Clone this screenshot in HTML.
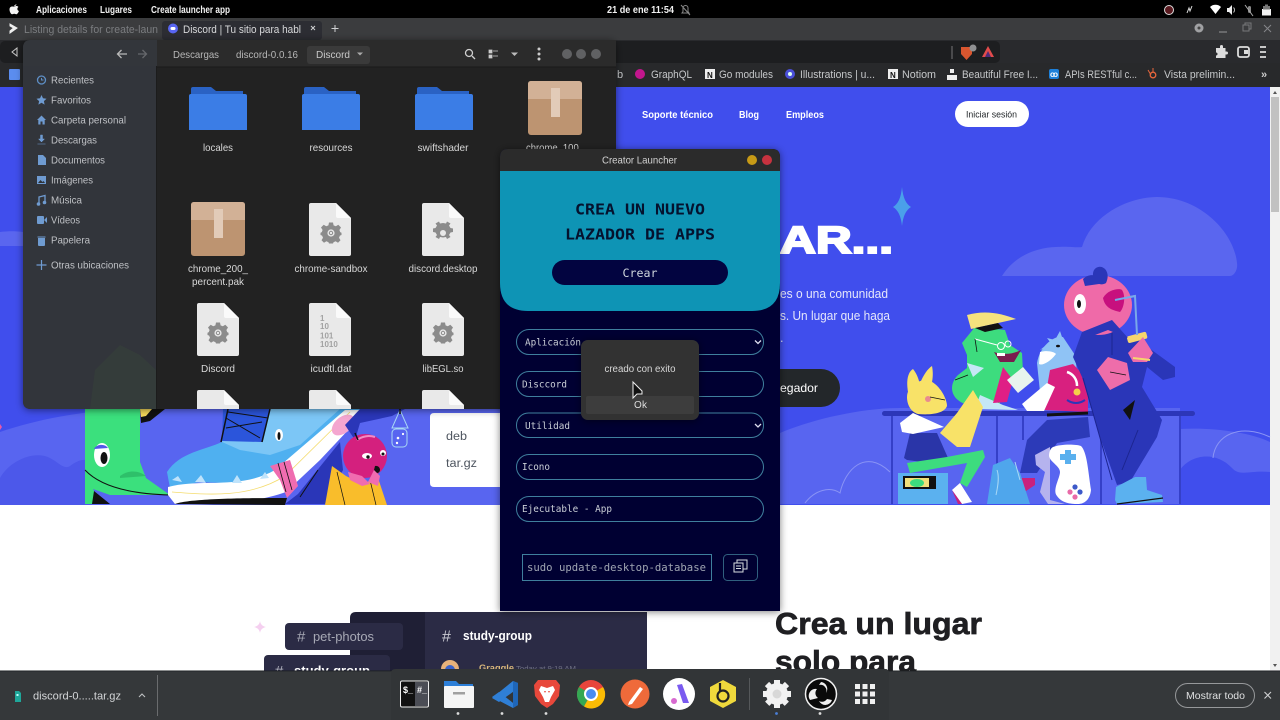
<!DOCTYPE html>
<html lang="es"><head><meta charset="utf-8"><title>Creator Launcher</title>
<style>
html,body{margin:0;padding:0;background:#000;width:1280px;height:720px;overflow:hidden}
svg{display:block}
text{font-family:"Liberation Sans",sans-serif;white-space:pre}
.m{font-family:"DejaVu Sans Mono","Liberation Mono",monospace}
.top{fill:#f2f2f2;font-size:10px;font-weight:bold}
.bm{fill:#c6c8ca;font-size:11px}
.side{fill:#bfc1c5;font-size:10.5px}
.file{fill:#d8d8d8;font-size:10.5px;text-anchor:middle}
.nav{fill:#fff;font-size:10.5px;font-weight:bold}
.para{fill:#e4e6fb;font-size:12.5px}
.fld{fill:#c9ced6;font-size:10px}
.ln{fill:none;stroke:#3f7f9d;stroke-width:1}
</style></head><body>
<svg xmlns="http://www.w3.org/2000/svg" width="1280" height="720" viewBox="0 0 1280 720">
<defs>
<filter id="sh" x="-10%" y="-10%" width="120%" height="120%"><feDropShadow dx="0" dy="1" stdDeviation="4" flood-color="#000" flood-opacity=".5"/></filter>
<clipPath id="fmclip"><rect x="157" y="67" width="459" height="342"/></clipPath>
<clipPath id="botclip"><rect x="0" y="505" width="1270" height="166"/></clipPath>
<symbol id="folder" viewBox="0 0 58 43"><path d="M2 2 Q2 0 4 0H22L27 4H54V10H2Z" fill="#2a62c4"/><path d="M0 9 Q0 7 2 7H56Q58 7 58 9V43H0Z" fill="#3b7de6"/></symbol>
<symbol id="box" viewBox="0 0 54 54"><rect width="54" height="54" rx="3" fill="#bd9471"/><path d="M0 3Q0 0 3 0H51Q54 0 54 3V18H0Z" fill="#d2b196"/><rect x="23" y="7" width="9" height="29" fill="#e2cbb8"/></symbol>
<symbol id="doc" viewBox="0 0 42 53"><path d="M2 0H27L42 15V51Q42 53 40 53H2Q0 53 0 51V2Q0 0 2 0Z" fill="#e9e9e9"/><path d="M27 0L42 15H29Q27 15 27 13Z" fill="#fafafa"/></symbol>
<symbol id="gear" viewBox="-11 -11 22 22"><path d="M-2-10.5H2L2.6-7.6 4.8-6.7 7.3-8.3 10-5.5 8.4-3 9.2-.9 10.5-.2V2L8.9 2.6 8 4.8 9.5 7.3 7 9.8 4.6 8.3 2.5 9.2 2 10.5H-2L-2.5 9.2-4.6 8.3-7 9.8-9.5 7.3-8 4.8-8.9 2.6-10.5 2V-.2L-9.2-.9-8.4-3-10-5.5-7.3-8.3-4.8-6.7-2.6-7.6Z" fill="#8b8b8b"/><circle r="3.6" fill="#e9e9e9"/><circle r="2.2" fill="#8b8b8b"/><circle r="1.2" fill="#e9e9e9"/></symbol>
</defs>

<!-- browser chrome -->
<rect width="1280" height="720" fill="#000"/>
<rect y="18" width="1280" height="22" fill="#3b3c3e"/>
<rect x="162" y="21" width="160" height="19" rx="3" fill="#2c2d33"/>
<rect y="40" width="1280" height="24" fill="#292a2d"/>
<rect x="0" y="41" width="1000" height="22" rx="5" fill="#1d1e20"/>
<rect y="63" width="1280" height="24" fill="#28292b"/>

<!-- hero -->
<rect y="87" width="1270" height="418" fill="#404eed"/>
<rect y="505" width="1270" height="166" fill="#fff"/>
<rect x="1270" y="87" width="10" height="584" fill="#f1f1f1"/>
<rect x="1271" y="97" width="8" height="115" fill="#c1c1c1"/>
<path d="M1275 91l-2 3h4zM1275 667l-2-3h4z" fill="#555"/>

<!-- left scene -->
<path d="M0 232C8 231 16 231 23 232V246H0Z" fill="#5a66ef"/>
<path d="M0 432C40 418 90 410 140 408H500V505H0Z" fill="#5865f0"/>
<path d="M0 478C10 460 35 450 50 458 58 462 64 470 70 466 78 460 85 458 92 462V505H0Z" fill="#4c58ea"/>
<path d="M0 424l2 3-2 3z" fill="#e85aa8"/>
<path d="M85 409H140V462L146 478 170 495H110L93 489 101 504H85Z" fill="#3be07d"/>
<path d="M120 476C128 470 138 470 146 476L120 478Z" fill="#2ec06a"/>
<path d="M85 470C100 486 130 494 170 495" fill="none" stroke="#111" stroke-width="1"/>
<path d="M92 504L94 491 110 504Z" fill="#111"/>
<ellipse cx="102" cy="455" rx="8" ry="12" fill="#fff"/><ellipse cx="104" cy="458" rx="3.5" ry="6" fill="#111"/><path d="M94 449a8 7 0 0 1 14-1z" fill="#5058e8"/>
<path d="M140 409H165L150 421 141 423Z" fill="#111"/><path d="M140 409H152L146 416 141 417Z" fill="#f9dc5c"/>
<!-- shoe -->
<path d="M167 472C180 452 205 450 222 442L228 409H365L330 442 292 470 270 485 200 482 170 488Z" fill="#4fb0f0"/>
<path d="M228 409H340L300 445 270 455 240 450 222 442Z" fill="#7cc6f6"/>
<path d="M223 409H270L262 442 222 441Z" fill="#2b55db"/>
<path d="M228 412L268 418M226 428L262 422M226 418L260 438" stroke="#111" stroke-width="1"/>
<path d="M228 409L221 442M270 409L262 442" stroke="#111" stroke-width="1.5"/>
<ellipse cx="279" cy="435" rx="4" ry="6" fill="#fff"/><ellipse cx="279" cy="436" rx="1.5" ry="4" fill="#111"/>
<path d="M168 487C200 478 240 490 275 470L345 410H367L320 460 286 492C250 505 200 505 175 504L168 495Z" fill="#fff"/>
<path d="M172 492C210 495 250 498 285 476L350 412" fill="none" stroke="#f4dc6e" stroke-width=".8"/>
<path d="M175 504C190 498 260 498 287 498L285 505Z" fill="#111"/>
<path d="M172 480l6-4 4 6ZM195 482l6-7 5 8ZM232 483l5-8 5 8ZM260 479l5-7 4 6Z" fill="#bfe3fb"/>
<ellipse cx="343" cy="425" rx="13" ry="8" transform="rotate(-40 343 425)" fill="#f4a6d0"/>
<path d="M270 466L290 460 298 486 287 498 280 480Z" fill="#ef6cb0"/>
<path d="M284 462L292 490M278 463L286 492" stroke="#111" stroke-width=".8"/>
<path d="M298 494L340 442 343 470 325 504H285Z" fill="#2a36b8"/>
<path d="M300 497L318 470" stroke="#111" stroke-width="1"/>
<path d="M360 409L405 409 392 416 360 423 355 440 345 425Z" fill="#2a36b8"/>
<!-- pink head & yellow body -->
<path d="M325 505L332 466 346 476 362 484 378 478 387 505Z" fill="#f9bd2b"/>
<path d="M337 472L345 505M370 480L376 505" stroke="#111" stroke-width=".7"/>
<circle cx="365" cy="456" r="22" fill="#d4207e"/>
<path d="M357 440a20 20 0 0 1 18-3" fill="none" stroke="#f28cc4" stroke-width="2"/>
<ellipse cx="367" cy="456" rx="5" ry="3" fill="#fff"/><ellipse cx="383" cy="453" rx="3" ry="3" fill="#fff"/><circle cx="368" cy="457" r="1.7" fill="#111"/><circle cx="383" cy="454" r="1.5" fill="#111"/>
<path d="M375 466a4 4 0 0 1 5 4 3 3 0 0 1-6 0z" fill="#111"/>
<path d="M348 472L362 476 370 484 362 486 350 480Z" fill="#f06cb0"/><path d="M368 482L374 470 380 476 378 486Z" fill="#f06cb0"/>
<path d="M358 440L355 433" stroke="#111" stroke-width="1.5"/>
<!-- jar -->
<g fill="none" stroke="#a8d8f5" stroke-width="1"><path d="M400 410L392 428H408Z"/><rect x="392" y="429" width="15" height="18" rx="4"/></g>
<path d="M400 409v5" stroke="#111" stroke-width="1.5"/>
<circle cx="398" cy="438" r="1.3" fill="#fff"/><circle cx="403" cy="434" r="1.1" fill="#fff"/><circle cx="397" cy="443" r="1.2" fill="#fff"/>
<!-- card -->
<path d="M434 413H500V487H434Q430 487 430 483V417Q430 413 434 413Z" fill="#fff"/>
<text x="446" y="440" font-size="11.5" fill="#4f5660" textLength="21" lengthAdjust="spacingAndGlyphs">deb</text>
<text x="446" y="467" font-size="11.5" fill="#4f5660" textLength="31" lengthAdjust="spacingAndGlyphs">tar.gz</text>

<!-- right scene -->
<path d="M1002 276C1012 260 1030 248 1056 247 1070 246 1076 248 1082 247 1092 214 1130 197 1157 197 1200 197 1234 232 1237 263 1238 270 1234 276 1230 276Z" fill="#5a66ef"/>
<path d="M902 187C903 198 906 204 911 207 906 210 903 216 902 226 901 216 898 210 893 207 898 204 901 198 902 187Z" fill="#4aa0ea"/>
<path d="M780 433C810 420 860 408 900 408H1180V429C1210 427 1250 432 1270 442V504H780Z" fill="#5865f0"/>
<path d="M1180 470C1190 455 1215 450 1232 468 1240 477 1250 470 1270 472V504H1180Z" fill="#404eed"/>
<path d="M1213 458C1215 435 1240 423 1270 437" fill="none" stroke="#8a94f5" stroke-width="1"/>
<path d="M805 503C815 490 830 486 840 493 845 470 865 448 890 472" fill="none" stroke="#8a94f5" stroke-width="1"/>
<path d="M892 416V504M997 416V504M1023 416V440M1101 416V504M1180 416V504" stroke="#3540c8" stroke-width="2"/>
<rect x="882" y="411" width="313" height="5" rx="2.5" fill="#2c36b8"/>
<!-- heading/para -->
<text x="780" y="253" font-size="38" font-weight="bold" fill="#fff" stroke="#fff" stroke-width="2" textLength="113" lengthAdjust="spacingAndGlyphs">AR...</text>
<text class="para" x="780" y="298" textLength="108" lengthAdjust="spacingAndGlyphs">es o una comunidad</text>
<text class="para" x="780" y="320" textLength="110" lengthAdjust="spacingAndGlyphs">s. Un lugar que haga</text>
<text class="para" x="780" y="342">.</text>
<path d="M780 369H821A19 19 0 0 1 821 407H780Z" fill="#23272a"/>
<text x="780" y="392" font-size="12" fill="#fff" textLength="38" lengthAdjust="spacingAndGlyphs">egador</text>
<!-- green guy -->
<path d="M962 343L975 327 1005 330 1010 345 1022 353 1023 372 1000 388 1000 408 968 405C950 400 948 385 958 375L967 368 967 355Z" fill="#3ddc7e"/>
<path d="M967 363L984 368 973 377Z" fill="#c5e7f5"/><path d="M975 409L980 395 1003 405 1018 410Z" fill="#c5e7f5"/>
<path d="M967 315C985 310 1000 313 1016 319L998 323 971 329Z" fill="#f5e27e"/><path d="M975 328L998 323 1003 328 985 332Z" fill="#111"/>
<path d="M993 403L1003 367 1013 380 1007 402Z" fill="#df1f85"/>
<path d="M1007 380L1023 367 1034 380 1018 393Z" fill="#e8f4ee"/>
<circle cx="1001" cy="346" r="3.5" fill="none" stroke="#fff" stroke-width="1"/><circle cx="1008" cy="344" r="3" fill="none" stroke="#fff" stroke-width="1"/><path d="M997 345L975 339" stroke="#fff" stroke-width="1"/>
<path d="M994 352C1005 356 1015 353 1021 350L1014 362H1000Z" fill="#7a1d4e"/><path d="M997 353h8v3h-8z" fill="#fff"/>
<path d="M955 380L968 375M975 339L977 352" stroke="#111" stroke-width=".8"/>
<!-- blue guy -->
<path d="M1037 363C1040 345 1055 335 1063 337L1075 355 1078 380 1040 392Z" fill="#8fc3f5"/>
<path d="M1040 350L1050 342 1047 338 1055 340 1060 331 1063 340Z" fill="#8fc3f5"/>
<path d="M1040 352C1048 350 1054 352 1056 354 1050 362 1042 366 1039 364Z" fill="#fff"/>
<ellipse cx="1058" cy="346" rx="2" ry="1.3" fill="#111"/>
<path d="M1043 410L1050 370 1073 364 1088 380 1088 412Z" fill="#d8207f"/>
<path d="M1067 372a14 14 0 0 1 10 14" fill="none" stroke="#fff" stroke-width="2.5"/>
<circle cx="1077" cy="392" r="3.5" fill="#f5d04a"/>
<path d="M1067 400c6 4 12 4 18 0" fill="none" stroke="#2c36b8" stroke-width="2"/>
<path d="M1022 404L1047 383 1055 387 1044 411 1027 411Z" fill="#fff"/>
<path d="M1020 473L1027 440 1047 420 1088 417 1090 437 1057 443 1037 473Z" fill="#2c3ab8"/>
<path d="M1047 415L1088 413" stroke="#111" stroke-width="3"/>
<path d="M1010 490L1020 478 1035 478 1035 485 1020 495Z" fill="#c9217d"/>
<!-- rock/controller -->
<path d="M987 504L993 465 1010 458 1020 473 1030 504Z" fill="#4fa6ec"/>
<path d="M997 470C1000 478 997 490 996 495M1015 462L1020 480" stroke="#a8d8f5" stroke-width="1" fill="none"/>
<path d="M1035 455L1050 447 1050 500 1065 504H1048L1040 492 1045 472 1036 465Z" fill="#b5b3ee"/>
<path d="M1053 447C1060 444 1076 444 1081 446 1087 452 1088 470 1091 490 1090 500 1084 504 1078 504 1070 504 1062 503 1057 496 1052 490 1060 478 1060 472 1060 466 1050 462 1049 456 1049 451 1051 448 1053 447Z" fill="#fff"/>
<path d="M1065 450h6v4h5v6h-5v4h-6v-4h-5v-6h5z" fill="#5ab0ee"/>
<circle cx="1075" cy="487" r="2.6" fill="#3d59c9"/><circle cx="1080" cy="492" r="2.6" fill="#3d59c9"/><circle cx="1070" cy="492" r="2.6" fill="#e86aa8"/><circle cx="1075" cy="497" r="2.6" fill="#e86aa8"/>
<!-- tall guy -->
<path d="M1082 332L1113 322 1127 337 1138 340 1175 367 1175 377 1163 380 1147 367 1142 387 1162 420 1157 437 1130 482 1117 485 1100 437 1082 377 1073 357Z" fill="#2a36b8"/>
<path d="M1083 378L1112 480M1138 430L1122 470M1112 322L1112 355" fill="none" stroke="#1c2590" stroke-width="1"/>
<path d="M1123 410L1135 400 1130 420Z" fill="#111"/>
<path d="M1097 370L1108 357 1127 363 1130 380 1110 390Z" fill="#ee6daa"/>
<path d="M1110 372L1126 375" stroke="#111" stroke-width=".8"/>
<rect x="1127" y="334" width="20" height="7" rx="2" transform="rotate(-15 1137 337)" fill="#f6d56e"/>
<path d="M1128 353L1143 337 1153 353 1147 362 1133 362Z" fill="#ee6daa"/>
<path d="M1133 358L1150 360" stroke="#f6d56e" stroke-width="2"/>
<path d="M1115 300L1135 296 1137 335" fill="none" stroke="#79a8ea" stroke-width="2"/>
<ellipse cx="1098" cy="305" rx="34" ry="30" fill="#ef6aa8"/>
<path d="M1082 332L1112 320 1128 338 1108 330 1082 340Z" fill="#2a36b8"/>
<path d="M1094 270C1100 262 1112 270 1106 283 1098 288 1090 278 1094 270Z" fill="#2a36b8"/>
<path d="M1083 279C1090 272 1100 276 1104 280L1106 283 1085 286Z" fill="#2a36b8"/>
<path d="M1103 298C1108 289 1120 288 1122 290 1126 296 1124 308 1120 312 1112 310 1105 308 1103 298Z" fill="#c7107e"/>
<path d="M1115 300L1135 296" stroke="#79a8ea" stroke-width="2"/>
<ellipse cx="1080" cy="304" rx="6" ry="10" fill="#fff"/><ellipse cx="1079" cy="304" rx="2" ry="4" fill="#111"/>
<path d="M1115 500L1116 487 1135 477 1146 477 1147 490 1162 495 1163 502 1117 504Z" fill="#5bb1ef"/>
<path d="M1117 504L1163 498" stroke="#111" stroke-width="1.3"/>
<!-- yellow rabbit -->
<path d="M908 392C906 380 908 372 913 369 918 375 921 385 920 392Z" fill="#f8e268"/>
<path d="M918 388C922 378 926 370 932 366 934 376 932 386 928 392Z" fill="#f8e268"/>
<path d="M907 397C907 387 917 380 927 380 938 382 947 398 947 406 944 414 930 415 918 414 911 412 907 405 907 397Z" fill="#f8e268"/>
<circle cx="928" cy="399" r="3" fill="#e88b90"/><path d="M930 397L945 400" stroke="#111" stroke-width=".8"/>
<path d="M904 458L910 433H937L948 458 930 463 907 460Z" fill="#2a35a8"/>
<path d="M957 413L973 390 983 407 970 447 957 447 940 433Z" fill="#f8e268"/>
<path d="M900 423L913 413 944 427 913 434 902 432Z" fill="#fff"/>
<path d="M907 463L947 457 983 450 985 457 967 487 960 483 967 463 910 473Z" fill="#3ddc7e"/>
<rect x="898" y="473" width="50" height="31" fill="#5bb1ef"/>
<rect x="903" y="476" width="33" height="13" fill="#111"/><rect x="905" y="478" width="24" height="9" fill="#f0e07c"/><ellipse cx="917" cy="483" rx="7" ry="4" fill="#3ddc7e"/>
<path d="M952 490L960 483 972 502 962 504Z" fill="#fff"/><path d="M952 490L958 504 962 504Z" fill="#c7217d"/>

<!-- nav -->
<text class="nav" x="642" y="118" textLength="71" lengthAdjust="spacingAndGlyphs">Soporte técnico</text>
<text class="nav" x="739" y="118" textLength="20" lengthAdjust="spacingAndGlyphs">Blog</text>
<text class="nav" x="786" y="118" textLength="38" lengthAdjust="spacingAndGlyphs">Empleos</text>
<rect x="955" y="101" width="74" height="26" rx="13" fill="#fff"/>
<text x="966" y="117.500" font-size="9.500" fill="#23272a" textLength="51" lengthAdjust="spacingAndGlyphs">Iniciar sesión</text>

<!-- bottom section -->
<path d="M260 621c.5 3 2 5 6 6-4 1-5.500 3-6 6-.5-3-2-5-6-6 4-1 5.500-3 6-6z" fill="#f5d0f0"/>
<path d="M356 612H647V671H350V618Q350 612 356 612Z" fill="#1f1f35"/>
<rect x="425" y="612" width="222" height="59" fill="#2b2b45"/>
<rect x="285" y="623" width="118" height="27" rx="4" fill="#2b2b45"/>
<text x="297" y="641.500" font-size="15" fill="#a7a9b5" textLength="13">#</text>
<text x="313" y="641" font-size="12.500" fill="#a7a9b5" textLength="61" lengthAdjust="spacingAndGlyphs">pet-photos</text>
<text x="442" y="641.500" font-size="16" fill="#c9cad2" textLength="14">#</text>
<text x="463" y="640" font-size="12.500" font-weight="bold" fill="#fff" textLength="69" lengthAdjust="spacingAndGlyphs">study-group</text>
<circle cx="450" cy="669" r="9" fill="#e8b27a"/><circle cx="450" cy="670" r="5" fill="#3a62c9"/>
<text x="479" y="671" font-size="9.500" font-weight="bold" fill="#d9b77a" textLength="35" lengthAdjust="spacingAndGlyphs">Graggle</text>
<text x="516" y="671" font-size="7" fill="#6f7183" textLength="60" lengthAdjust="spacingAndGlyphs">Today at 9:19 AM</text>
<rect x="264" y="655" width="126" height="20" rx="4" fill="#2b2b45"/>
<text x="275" y="676" font-size="15" fill="#b4b5c0" textLength="13">#</text>
<text x="294" y="675" font-size="13" font-weight="bold" fill="#fff" textLength="76" lengthAdjust="spacingAndGlyphs">study-group</text>
<g clip-path="url(#botclip)">
<text x="775" y="634" font-size="31" font-weight="bold" fill="#1f1f22" stroke="#1f1f22" stroke-width=".7" textLength="207" lengthAdjust="spacingAndGlyphs">Crea un lugar</text>
<text x="775" y="672" font-size="31" font-weight="bold" fill="#1f1f22" stroke="#1f1f22" stroke-width=".7" textLength="141" lengthAdjust="spacingAndGlyphs">solo para</text>
</g>

<!-- top bar text -->
<path d="M14 6c1-1.500 2-1.800 2.500-1.800-.1 1-1 2-2.400 1.900zM13.800 6.600c1 0 1.500-.6 2.600-.6.800 0 1.500.3 2 1-1.600 1-1.300 3.300.5 4-.5 1.500-1.600 3.300-2.700 3.300-.8 0-1-.5-2-.5s-1.300.5-2 .5C10.800 14.300 9.500 11.500 9.500 9.500c0-2 1.300-3 2.600-3 .8 0 1.200.1 1.700.1z" fill="#f4f4f4"/>
<text class="top" x="36" y="13" textLength="51" lengthAdjust="spacingAndGlyphs">Aplicaciones</text>
<text class="top" x="100" y="13" textLength="32" lengthAdjust="spacingAndGlyphs">Lugares</text>
<text class="top" x="151" y="13" textLength="79" lengthAdjust="spacingAndGlyphs">Create launcher app</text>
<text class="top" x="607" y="13" textLength="67" lengthAdjust="spacingAndGlyphs">21 de ene 11:54</text>
<path d="M682 13h7l-1-1.500V8a2.500 2.500 0 0 0-5 0v3.500zM681 5l9 10" fill="none" stroke="#888" stroke-width="1"/>
<circle cx="1169" cy="10" r="4.500" fill="#5a1a20" stroke="#ddd" stroke-width="1"/>
<path d="M1187 13l2-5 1 3 2-5" fill="none" stroke="#ddd" stroke-width="1"/>
<path d="M1210 7a8 8 0 0 1 11 0l-5.500 7z" fill="#fff"/>
<path d="M1227 8h2l3-3v10l-3-3h-2z" fill="#eee"/><path d="M1233.500 7.500a3.500 3.500 0 0 1 0 5" fill="none" stroke="#bbb"/>
<rect x="1248" y="6" width="3" height="7" rx="1.500" fill="#888"/><path d="M1245 5l8 11" stroke="#aaa"/>
<rect x="1262" y="9" width="9" height="6.500" fill="#f2f2f2"/><rect x="1263" y="6" width="7" height="3.500" fill="#777"/><rect x="1265" y="4.500" width="3" height="2" fill="#777"/>

<!-- tabs -->
<path d="M10 24l7 4-7 5v-2l3.500-3-3.500-2z" fill="#eee" stroke="#eee"/>
<text x="24" y="33" font-size="11" fill="#7b7d80" textLength="134" lengthAdjust="spacingAndGlyphs">Listing details for create-laun</text>
<circle cx="173" cy="28.500" r="5" fill="#5865f2"/><rect x="170.500" y="27" width="5" height="3" rx="1.500" fill="#fff"/>
<text x="183" y="33" font-size="11" fill="#d8d9db" textLength="118" lengthAdjust="spacingAndGlyphs">Discord | Tu sitio para habl</text>
<path d="M311 26l4 4m0-4l-4 4M335 25v7M331.500 28.500h7" stroke="#cfd0d2" stroke-width="1" fill="none"/>
<circle cx="1199" cy="28" r="4.500" fill="#a0a1a3"/><circle cx="1199" cy="28" r="1.500" fill="#444"/>
<path d="M1219 32h8" stroke="#77787a" stroke-width="1.500"/>
<rect x="1243" y="25" width="6" height="6" fill="none" stroke="#77787a"/><path d="M1245 25v-2h6v6h-2" fill="none" stroke="#77787a"/>
<path d="M1264 25l7 7m0-7l-7 7" stroke="#85868a"/>

<!-- toolbar -->
<path d="M17 48l-5 4 5 4z" fill="none" stroke="#ccc" stroke-width="1"/>
<path d="M952 46v13" stroke="#777"/>
<path d="M961 47h11v7l-5.500 6-5.500-6z" fill="#d9562f"/><circle cx="973" cy="48" r="3.500" fill="#8f9092"/>
<path d="M988 46l6 11h-12z" fill="#e24b4b"/><path d="M988 51l3 6h-6z" fill="#4f2a7a"/>
<path d="M1216 48h4v-1.500a1.500 1.500 0 0 1 3 0V48h2.500v3.500h1a1.500 1.500 0 0 1 0 3h-1V58h-9.500v-2.500a1.500 1.500 0 0 0 0-3v-4z" fill="#dcdcdc"/>
<rect x="1238" y="47" width="11" height="10" rx="2" fill="none" stroke="#dcdcdc" stroke-width="1.800"/><rect x="1244" y="50" width="4" height="4" fill="#dcdcdc"/>
<path d="M1260 47h6M1260 52h6M1260 57h6" stroke="#dcdcdc" stroke-width="1.800"/>

<!-- bookmarks -->
<rect x="9" y="69" width="11" height="11" rx="1" fill="#5b8def"/>
<text class="bm" x="617" y="78">b</text>
<circle cx="640" cy="74" r="5" fill="#c2168d"/>
<text class="bm" x="651" y="78" textLength="41" lengthAdjust="spacingAndGlyphs">GraphQL</text>
<rect x="705" y="69" width="10" height="10" fill="#eee"/><text x="707" y="78" font-size="8" font-weight="bold" fill="#111">N</text>
<text class="bm" x="719" y="78" textLength="54" lengthAdjust="spacingAndGlyphs">Go modules</text>
<circle cx="790" cy="74" r="5" fill="#4a4fd8"/><circle cx="790" cy="74" r="2" fill="#dfe"/>
<text class="bm" x="800" y="78" textLength="75" lengthAdjust="spacingAndGlyphs">Illustrations | u...</text>
<rect x="888" y="69" width="10" height="10" fill="#eee"/><text x="890" y="78" font-size="8" font-weight="bold" fill="#111">N</text>
<text class="bm" x="902" y="78" textLength="34" lengthAdjust="spacingAndGlyphs">Notiom</text>
<rect x="947" y="75" width="10" height="5" fill="#eee"/><rect x="950" y="69" width="4" height="4" fill="#eee"/>
<text class="bm" x="962" y="78" textLength="76" lengthAdjust="spacingAndGlyphs">Beautiful Free I...</text>
<rect x="1049" y="69" width="10" height="10" rx="2" fill="#1d7fd8"/><text x="1050" y="77" font-size="8" font-weight="bold" fill="#fff" textLength="8">oo</text>
<text class="bm" x="1065" y="78" textLength="72" lengthAdjust="spacingAndGlyphs">APIs RESTful c...</text>
<circle cx="1153" cy="75" r="2.800" fill="none" stroke="#e8663c" stroke-width="1.300"/><path d="M1153 72V68M1151 75l-3-5" stroke="#e8663c"/>
<text class="bm" x="1164" y="78" textLength="71" lengthAdjust="spacingAndGlyphs">Vista prelimin...</text>
<text x="1261" y="78" font-size="11" font-weight="bold" fill="#ccc">»</text>

<!-- file manager -->
<g filter="url(#sh)"><path d="M31 40H608Q616 40 616 48V409H31Q23 409 23 401V48Q23 40 31 40Z" fill="#242424"/></g>
<path d="M31 40H157V409H31Q23 409 23 401V48Q23 40 31 40Z" fill="#32353b"/>
<path d="M90 409L95 370 120 345 140 355 156 370V409Z" fill="#3a4a3a" opacity=".35"/>
<rect x="157" y="40" width="459" height="27" fill="#2b2b2b"/>
<rect x="157" y="66.500" width="459" height="1" fill="#1a1a1a"/>
<rect x="156" y="40" width="1" height="369" fill="#1c1c1c"/>
<path d="M35 40H157V66H23V48Q23 40 31 40Z" fill="#33363b"/>
<path d="M127 54h-9m3.500-4l-4 4 4 4" fill="none" stroke="#b9b9b9" stroke-width="1.300"/>
<path d="M138 54h8m-3.500-4l4 4-4 4" fill="none" stroke="#66686c" stroke-width="1.300"/>
<text x="173" y="58" font-size="10.500" fill="#b8b8b8" textLength="46" lengthAdjust="spacingAndGlyphs">Descargas</text>
<text x="236" y="58" font-size="10.500" fill="#b8b8b8" textLength="62" lengthAdjust="spacingAndGlyphs">discord-0.0.16</text>
<rect x="307" y="46" width="63" height="18" rx="3" fill="#3a3a3a"/>
<text x="316" y="58" font-size="10.500" fill="#c9c9c9" textLength="34" lengthAdjust="spacingAndGlyphs">Discord</text>
<path d="M357 52.500h6l-3 3z" fill="#aaa"/>
<circle cx="469" cy="53" r="3.500" fill="none" stroke="#d0d0d0" stroke-width="1.300"/><path d="M472 56l3 3" stroke="#d0d0d0" stroke-width="1.300"/>
<path d="M489 50h3v3h-3zM489 55h3v3h-3zM493 51h5M493 56h5" fill="#ccc" stroke="#ccc" stroke-width=".8"/>
<path d="M511 52.500h7l-3.500 3.500z" fill="#bbb"/>
<circle cx="539" cy="49" r="1.500" fill="#ccc"/><circle cx="539" cy="54" r="1.500" fill="#ccc"/><circle cx="539" cy="59" r="1.500" fill="#ccc"/>
<circle cx="567" cy="54" r="5" fill="#606163"/><circle cx="581" cy="54" r="5" fill="#606163"/><circle cx="596" cy="54" r="5" fill="#606163"/>

<!-- sidebar -->
<circle cx="41.500" cy="80" r="4" fill="none" stroke="#5e8fc6" stroke-width="1.300"/><path d="M41.500 78v2h2" stroke="#5e8fc6" fill="none"/>
<text class="side" x="51" y="83.500" textLength="43" lengthAdjust="spacingAndGlyphs">Recientes</text>
<path d="M41.500 95l1.500 3.300 3.500.4-2.600 2.400.7 3.500-3.100-1.800-3.100 1.800.7-3.500-2.600-2.400 3.500-.4z" fill="#6f9bd1"/>
<text class="side" x="51" y="103.500" textLength="40" lengthAdjust="spacingAndGlyphs">Favoritos</text>
<path d="M37 120l4.500-4.500 4.500 4.500h-1.300v4.500h-2.200v-3h-2v3h-2.200V120z" fill="#6f9bd1"/>
<text class="side" x="51" y="123.500" textLength="75" lengthAdjust="spacingAndGlyphs">Carpeta personal</text>
<path d="M40.500 135h2v4h2l-3 3-3-3h2zM37.500 144h8" fill="#6f9bd1" stroke="#6f9bd1" stroke-width=".5"/>
<text class="side" x="51" y="143.500" textLength="46" lengthAdjust="spacingAndGlyphs">Descargas</text>
<path d="M38 155h5l3 3v7h-8z" fill="#6f9bd1"/>
<text class="side" x="51" y="163.500" textLength="54" lengthAdjust="spacingAndGlyphs">Documentos</text>
<rect x="37" y="176" width="9" height="8" fill="#6f9bd1"/><path d="M38 183l2.500-3 2 2 1-1 1.500 2z" fill="#2e3238"/>
<text class="side" x="51" y="183.500" textLength="42" lengthAdjust="spacingAndGlyphs">Imágenes</text>
<path d="M39 204v-7l6-1.500v7" fill="none" stroke="#6f9bd1" stroke-width="1.300"/><circle cx="38.500" cy="204" r="1.800" fill="#6f9bd1"/><circle cx="44.500" cy="202.500" r="1.800" fill="#6f9bd1"/>
<text class="side" x="51" y="203.500" textLength="31" lengthAdjust="spacingAndGlyphs">Música</text>
<rect x="37" y="216" width="7" height="8" rx="1" fill="#6f9bd1"/><path d="M44 220l3-3v6z" fill="#6f9bd1"/>
<text class="side" x="51" y="223.500" textLength="29" lengthAdjust="spacingAndGlyphs">Vídeos</text>
<path d="M38 238h7v7a1 1 0 0 1-1 1h-5a1 1 0 0 1-1-1zM37.500 236.500h8v1h-8z" fill="#6f9bd1"/>
<text class="side" x="51" y="243.500" textLength="39" lengthAdjust="spacingAndGlyphs">Papelera</text>
<path d="M41.500 260v10M36.500 265h10" stroke="#6f9bd1" stroke-width="1.200"/>
<text class="side" x="51" y="268.500" textLength="78" lengthAdjust="spacingAndGlyphs">Otras ubicaciones</text>

<!-- files -->
<g clip-path="url(#fmclip)">
<use href="#folder" x="189" y="87" width="58" height="43"/>
<use href="#folder" x="302" y="87" width="58" height="43"/>
<use href="#folder" x="415" y="87" width="58" height="43"/>
<use href="#box" x="528" y="81" width="54" height="54"/>
<text class="file" x="218" y="151" textLength="30" lengthAdjust="spacingAndGlyphs">locales</text>
<text class="file" x="331" y="151" textLength="43" lengthAdjust="spacingAndGlyphs">resources</text>
<text class="file" x="443" y="151" textLength="51" lengthAdjust="spacingAndGlyphs">swiftshader</text>
<text class="file" x="555" y="151" textLength="58" lengthAdjust="spacingAndGlyphs">chrome_100_</text>
<use href="#box" x="191" y="202" width="54" height="54"/>
<use href="#doc" x="309" y="203" width="42" height="53"/><use href="#gear" x="320" y="222" width="22" height="22"/>
<use href="#doc" x="422" y="203" width="42" height="53"/>
<path d="M443 223l3 .5 1-2 3.500 2-1.500 2 1.500 2.500 2.500.5v3.500l-2.500.5-1.500 2.500 1.500 2-3.500 2-1-2-3 .5-3-.5-1 2-3.500-2 1.500-2-1.500-2.500-2.500-.5v-3.500l2.500-.5 1.500-2.500-1.500-2 3.500-2 1 2z" fill="#8b8b8b"/><circle cx="443" cy="233" r="3" fill="#e9e9e9"/>
<text class="file" x="218" y="272" textLength="60" lengthAdjust="spacingAndGlyphs">chrome_200_</text>
<text class="file" x="218" y="285" textLength="52" lengthAdjust="spacingAndGlyphs">percent.pak</text>
<text class="file" x="331" y="272" textLength="73" lengthAdjust="spacingAndGlyphs">chrome-sandbox</text>
<text class="file" x="443" y="272" textLength="69" lengthAdjust="spacingAndGlyphs">discord.desktop</text>
<use href="#doc" x="197" y="303" width="42" height="53"/><use href="#gear" x="207" y="322" width="22" height="22"/>
<use href="#doc" x="309" y="303" width="42" height="53"/>
<g font-size="8" font-weight="bold" fill="#a2a2a2"><text x="320" y="321">1</text><text x="320" y="329">10</text><text x="320" y="338.500">101</text><text x="320" y="347">1010</text></g>
<use href="#doc" x="422" y="303" width="42" height="53"/><use href="#gear" x="432" y="322" width="22" height="22"/>
<text class="file" x="218" y="372" textLength="34" lengthAdjust="spacingAndGlyphs">Discord</text>
<text class="file" x="331" y="372" textLength="41" lengthAdjust="spacingAndGlyphs">icudtl.dat</text>
<text class="file" x="443" y="372" textLength="41" lengthAdjust="spacingAndGlyphs">libEGL.so</text>
<use href="#doc" x="197" y="390" width="42" height="53"/>
<use href="#doc" x="309" y="390" width="42" height="53"/>
<use href="#doc" x="422" y="390" width="42" height="53"/>
</g>

<!-- creator window -->
<g filter="url(#sh)"><path d="M508 149H772Q780 149 780 157V611H500V157Q500 149 508 149Z" fill="#020332"/></g>
<path d="M508 149H772Q780 149 780 157V171H500V157Q500 149 508 149Z" fill="#2b2b2b"/>
<path d="M500 171H780V283Q780 311 752 311H528Q500 311 500 283Z" fill="#0e94b5"/>
<text x="602" y="163.500" font-size="10.500" fill="#d4d4d4" textLength="75" lengthAdjust="spacingAndGlyphs">Creator Launcher</text>
<circle cx="752" cy="160" r="5" fill="#c79a16"/><circle cx="767" cy="160" r="5" fill="#c7323f"/>
<text class="m" x="575" y="214.500" font-size="15" font-weight="bold" fill="#05122e" textLength="130" lengthAdjust="spacingAndGlyphs">CREA UN NUEVO</text>
<text class="m" x="565" y="239.500" font-size="15" font-weight="bold" fill="#05122e" textLength="150" lengthAdjust="spacingAndGlyphs">LAZADOR DE APPS</text>
<rect x="552" y="260" width="176" height="25" rx="12.500" fill="#020440"/>
<text class="m" x="622.500" y="277" font-size="11.500" fill="#cfd6dd" textLength="35" lengthAdjust="spacingAndGlyphs">Crear</text>
<rect class="ln" x="516.500" y="329.500" width="247" height="25" rx="12.500"/>
<text class="m fld" x="525" y="345.500" textLength="56" lengthAdjust="spacingAndGlyphs">Aplicación</text>
<path d="M755 340.500l3 3 3-3" fill="none" stroke="#dde" stroke-width="1.300"/>
<rect class="ln" x="516.500" y="371.500" width="247" height="25" rx="12.500"/>
<text class="m fld" x="522" y="387.500" textLength="45" lengthAdjust="spacingAndGlyphs">Disccord</text>
<rect class="ln" x="516.500" y="413" width="247" height="24.500" rx="12"/>
<text class="m fld" x="525" y="429" textLength="45" lengthAdjust="spacingAndGlyphs">Utilidad</text>
<path d="M755 424l3 3 3-3" fill="none" stroke="#dde" stroke-width="1.300"/>
<rect class="ln" x="516.500" y="454.500" width="247" height="25" rx="12.500"/>
<text class="m fld" x="522" y="470" textLength="28" lengthAdjust="spacingAndGlyphs">Icono</text>
<rect class="ln" x="516.500" y="496.500" width="247" height="25" rx="12.500"/>
<text class="m fld" x="522" y="512" textLength="90" lengthAdjust="spacingAndGlyphs">Ejecutable - App</text>
<rect class="ln" x="522.500" y="554.500" width="189" height="26"/>
<text class="m" x="527" y="571" font-size="10.500" fill="#9fa5b2" textLength="179" lengthAdjust="spacingAndGlyphs">sudo update-desktop-database</text>
<rect x="723.500" y="554.500" width="34" height="26" rx="4" fill="none" stroke="#30607f"/>
<rect x="737" y="560" width="10" height="9" fill="#020332" stroke="#d8dde0" stroke-width="1"/>
<rect x="734" y="563" width="9" height="9" fill="#020332" stroke="#d8dde0" stroke-width="1"/>
<path d="M736 566h5M736 568.500h5" stroke="#d8dde0"/>

<!-- dialog -->
<g filter="url(#sh)"><rect x="581" y="340" width="118" height="80" rx="7" fill="#333"/></g>
<rect x="586" y="396" width="108" height="18" rx="2" fill="#3d3d3d"/>
<text x="604.500" y="372" font-size="10" fill="#d8d8d8" textLength="71" lengthAdjust="spacingAndGlyphs">creado con exito</text>
<text x="634" y="408" font-size="10" fill="#dedede" textLength="13">Ok</text>
<path d="M633 382V398L637 394 642 394 642 391Z" fill="#111" stroke="#eee" stroke-width="1"/>

<!-- download bar -->
<rect y="671" width="1280" height="49" fill="#35383a"/>
<rect y="670.500" width="1280" height=".8" fill="#1a1c1e"/>
<path d="M15 691h4l2 2v9h-6z" fill="#1fa79a"/><rect x="16.500" y="694" width="2" height="2" fill="#bff"/>
<text x="33" y="699.500" font-size="11" fill="#d4d6d8" textLength="88" lengthAdjust="spacingAndGlyphs">discord-0.....tar.gz</text>
<path d="M139 697l3-3 3 3" fill="none" stroke="#bfc1c3" stroke-width="1.100"/>
<rect x="157" y="675" width="1" height="41" fill="#6a6c6e"/>
<path d="M396 669H885Q889 669 889 673V720H391V673Q391 669 396 669Z" fill="#323537"/>
<rect x="1175.500" y="683.500" width="79" height="24" rx="12" fill="none" stroke="#96989a"/>
<text x="1186" y="699" font-size="10.500" fill="#dfe0e1" textLength="59" lengthAdjust="spacingAndGlyphs">Mostrar todo</text>
<path d="M1264.500 692l6.500 6.500m0-6.500l-6.500 6.500" stroke="#d0d1d2" stroke-width="1.100"/>

<!-- dock -->
<rect x="400.500" y="681" width="28" height="26" rx="1.500" fill="#111" stroke="#eee" stroke-width="1"/>
<rect x="415" y="682" width="13" height="24" fill="#4b4d55"/>
<text x="403" y="693" font-size="9" font-weight="bold" fill="#fff" textLength="10">$_</text>
<text x="417" y="693" font-size="9" font-weight="bold" fill="#fff" textLength="10">#_</text>
<path d="M444 681H456L459 684H473V690H444Z" fill="#2d7fd8"/>
<rect x="444" y="686" width="30" height="22" rx="1" fill="#f5f5f5"/><rect x="453" y="692" width="12" height="2.500" fill="#a0a0a0"/>
<path d="M513 681L492 698 499 702 517 689V706L499 692 492 697 513 708 518 705V683Z" fill="#2f7fd6"/>
<path d="M513 681L518 683V705L513 708Z" fill="#1f66b8"/>
<path d="M538 680H556L560 685 559 696 553 704 547 708 541 704 535 696 534 685Z" fill="#e8483b"/>
<path d="M541 686L547 688 553 686 555 690 551 697 549 702H545L543 697 539 690Z" fill="#fff"/>
<path d="M544 691h2l-1 2zM548 691h2l-1 2z" fill="#e8483b"/>
<circle cx="591" cy="694" r="14" fill="#e8453c"/>
<path d="M591 694L579 687A14 14 0 0 0 584 706.500Z" fill="#34a853"/><path d="M591 694L584 706.500A14 14 0 0 0 603 687Z" fill="#fbbc05"/>
<circle cx="591" cy="694" r="7" fill="#fff"/><circle cx="591" cy="694" r="5" fill="#4a8cf0"/>
<circle cx="635" cy="694" r="14.500" fill="#ef6a3a"/><path d="M629 702L640 687 643 689 632 704 628 705Z" fill="#fff"/>
<circle cx="679" cy="694" r="16" fill="#fff"/>
<path d="M677 685L682 684 689 703 683 703Z" fill="#7a5af0"/><circle cx="674" cy="701" r="3" fill="#d86ad0"/>
<path d="M723 680L736 687V701L723 708 710 701V687Z" fill="#efd93c"/>
<circle cx="723" cy="696" r="5.500" fill="none" stroke="#222" stroke-width="2.200"/><path d="M720 683v8" stroke="#222" stroke-width="2.200"/>
<rect x="749" y="678" width="1" height="32" fill="#55585a"/>
<circle cx="777" cy="694" r="11" fill="#f2f2f2"/>
<path d="M777 680V708M763 694H791M767 684L787 704M787 684L767 704" stroke="#f2f2f2" stroke-width="6" stroke-dasharray="6 16"/>
<circle cx="777" cy="694" r="4.500" fill="#d8d8d8"/>
<circle cx="821" cy="694" r="15.500" fill="#0a0a0a" stroke="#f0f0f0" stroke-width="1.500"/>
<path d="M821 682a7 7 0 0 1 5 11 6 6 0 0 0-7-8zM810 700a7 7 0 0 1 7-11 6 6 0 0 0 1 9zM832 700a7 7 0 0 1-13 1 6 6 0 0 0 8-2z" fill="#f0f0f0"/>
<g fill="#f0f0f0"><rect x="855" y="684" width="5" height="5"/><rect x="862.500" y="684" width="5" height="5"/><rect x="870" y="684" width="5" height="5"/><rect x="855" y="691.500" width="5" height="5"/><rect x="862.500" y="691.500" width="5" height="5"/><rect x="870" y="691.500" width="5" height="5"/><rect x="855" y="699" width="5" height="5"/><rect x="862.500" y="699" width="5" height="5"/><rect x="870" y="699" width="5" height="5"/></g>
<circle cx="458" cy="713.500" r="1.400" fill="#ddd"/><circle cx="502" cy="713.500" r="1.400" fill="#ddd"/><circle cx="546" cy="713.500" r="1.400" fill="#ddd"/><circle cx="776.500" cy="713.500" r="1.400" fill="#4a7fd8"/><circle cx="820" cy="713.500" r="1.400" fill="#ddd"/>
</svg>
</body></html>
